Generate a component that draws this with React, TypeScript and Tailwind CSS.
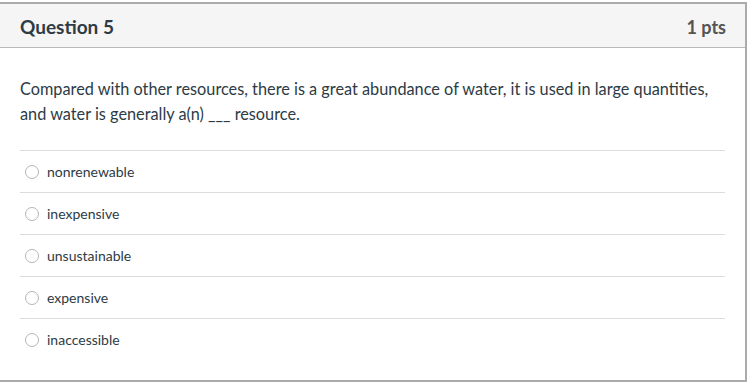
import React from "react"

// Quiz question card — Canvas style
const ANSWERS = ["nonrenewable", "inexpensive", "unsustainable", "expensive", "inaccessible"]

export default function App() {
  return (
    <div
      className="w-[749px] h-[385px] bg-white pt-[2px] text-[#2d3b45]"
      style={{ fontFamily: "Lato, 'Liberation Sans', sans-serif" }}
    >
      <div className="w-[747px] h-[380px] border-t-2 border-r-2 border-b-2 border-[#ababab]">
        {/* header */}
        <div className="h-[44px] bg-[#f5f5f5] border-b border-[#b8b8b8] flex items-center justify-between pl-5 pr-[19px] pt-[3px]">
          <h2 className="text-[19px] font-bold">Question 5</h2>
          <span className="text-[18px] font-bold text-[#545454]">1 pts</span>
        </div>

        {/* body */}
        <div className="px-5 pt-[28px]">
          <p className="text-[16.3px] leading-[25px]">
            Compared with other resources, there is a great abundance of water, it is used in large quantities,
            and water is generally a(n) ___ resource.
          </p>

          <div className="mt-[24px]">
            {ANSWERS.map((a) => (
              <label
                key={a}
                className="h-[42px] border-t border-[#dcdcdc] flex items-center gap-[8px] pl-[5px] text-[14px]"
              >
                <span className="w-[14px] h-[14px] rounded-full border border-[#b5b5b5] bg-white shrink-0" />
                <span>{a}</span>
              </label>
            ))}
          </div>
        </div>
      </div>
    </div>
  )
}
